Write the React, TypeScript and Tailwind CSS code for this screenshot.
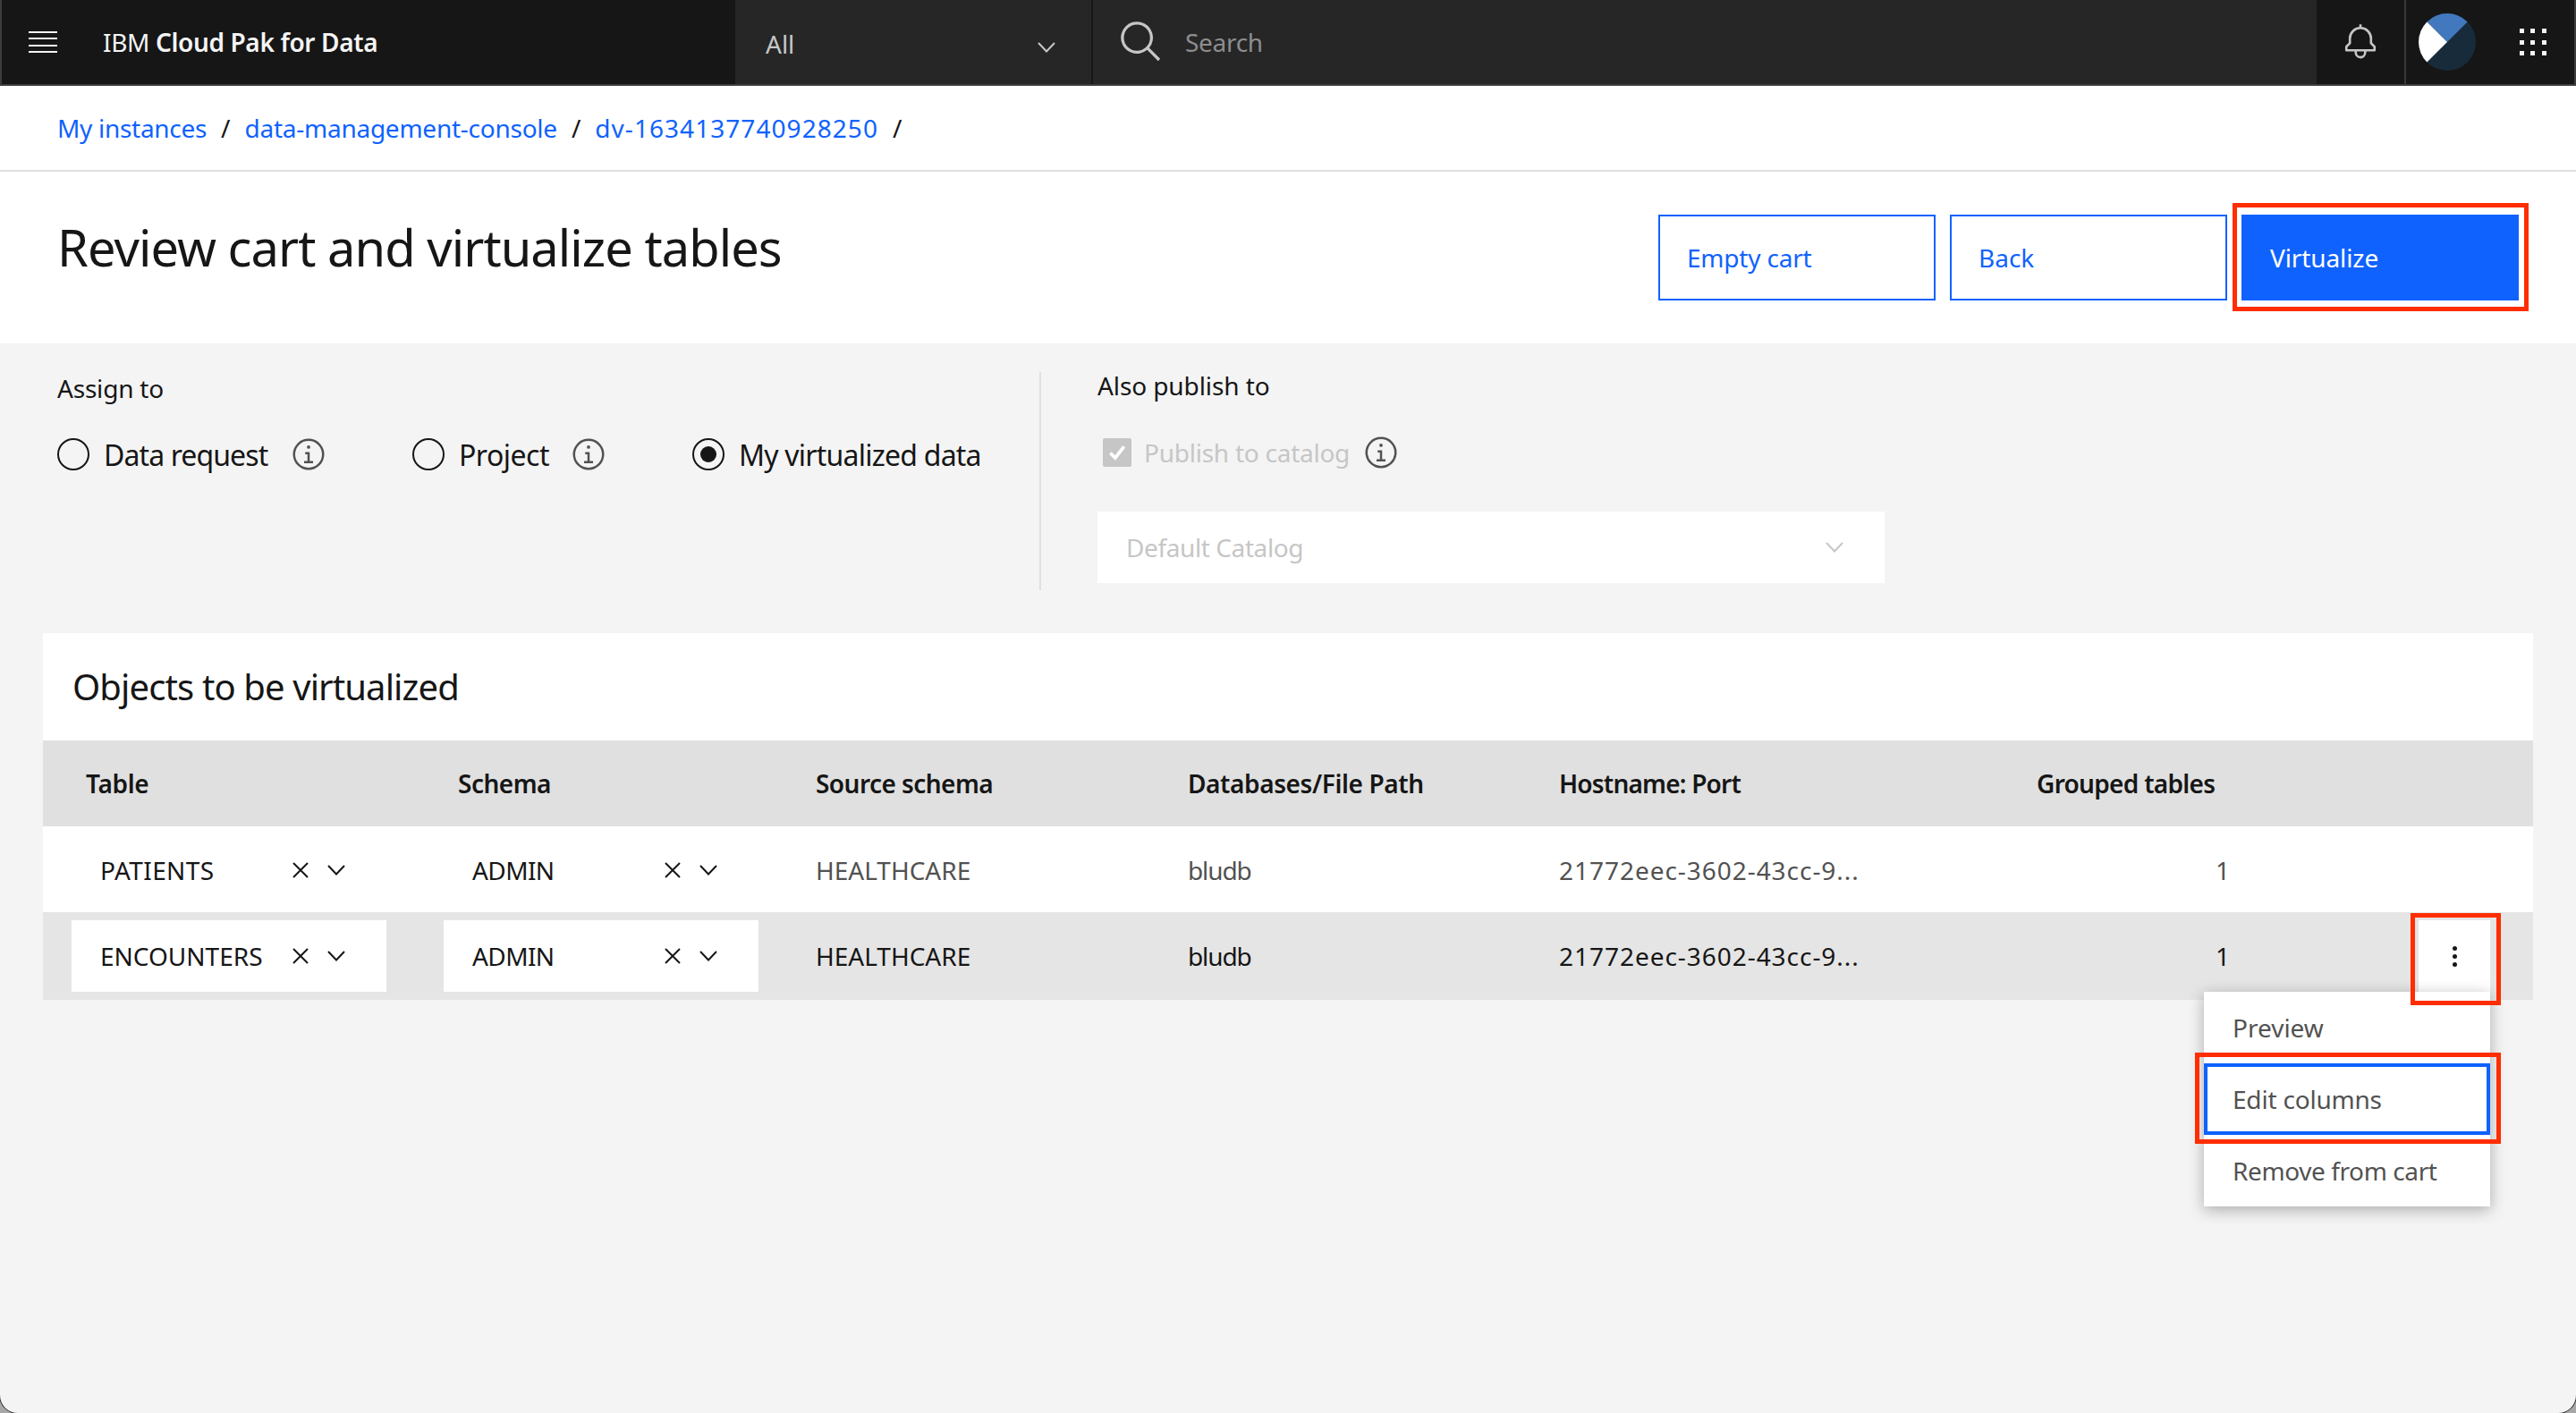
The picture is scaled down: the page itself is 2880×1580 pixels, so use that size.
import type { ReactNode } from "react";

const FONT = "font-['Noto_Sans','Liberation_Sans',sans-serif]";

function InfoIcon({ className }: { className?: string }) {
  return (
    <svg viewBox="0 0 32 32" className={className} fill="currentColor">
      <path d="M17 22L17 14 13 14 13 16 15 16 15 22 12 22 12 24 20 24 20 22 17 22zM16 8a1.5 1.5 0 101.5 1.5A1.5 1.5 0 0016 8z" />
      <path d="M16,30A14,14,0,1,1,30,16,14,14,0,0,1,16,30ZM16,4A12,12,0,1,0,28,16,12,12,0,0,0,16,4Z" />
    </svg>
  );
}

function Chevron({ className }: { className?: string }) {
  return (
    <svg viewBox="0 0 20 12" className={className} fill="none" stroke="currentColor" strokeWidth="2">
      <path d="M1 1l9 9.5L19 1" />
    </svg>
  );
}

function CloseIcon() {
  return (
    <svg viewBox="0 0 18 18" className="h-[18px] w-[18px] text-[#161616]" fill="none" stroke="currentColor" strokeWidth="2">
      <path d="M1 1l16 16M17 1L1 17" />
    </svg>
  );
}

function Radio({ checked }: { checked?: boolean }) {
  return (
    <span className="flex size-[36px] shrink-0 items-center justify-center rounded-full border-2 border-[#161616]">
      {checked ? <span className="size-[18px] rounded-full bg-[#161616]" /> : null}
    </span>
  );
}

function Annotation({ className }: { className: string }) {
  return <span className={`pointer-events-none absolute z-30 border-[5px] border-[#ff2d00] ${className}`} />;
}

function ComboBox({ value, filled, tracking }: { value: string; filled?: boolean; tracking: string }) {
  return (
    <div className={`flex h-[80px] w-[352px] items-center pl-[32px] text-[28px] ${filled ? "bg-white" : ""}`}>
      <span className={`w-[215px] text-[#161616] ${tracking}`}>{value}</span>
      <CloseIcon />
      <Chevron className="ml-[21px] h-[12px] w-[20px] text-[#161616]" />
    </div>
  );
}

function Cell({ children }: { children: ReactNode }) {
  return <div className="flex items-center">{children}</div>;
}

function TableRow({ name, active, tracking }: { name: string; active?: boolean; tracking: string }) {
  const tone = active ? "text-[#161616]" : "text-[#525252]";
  return (
    <div
      className={`grid grid-cols-[416px_448px_416px_415px_534px_1fr] text-[28px] ${
        active ? "h-[98px] bg-[#e5e5e5]" : "h-[96px] bg-white pt-[2px]"
      }`}
    >
      <Cell>
        <div className="pl-[32px]">
          <ComboBox value={name} filled={active} tracking={tracking} />
        </div>
      </Cell>
      <Cell>
        <div className="pl-[32px]">
          <ComboBox value="ADMIN" filled={active} tracking="tracking-[-0.6px]" />
        </div>
      </Cell>
      <Cell>
        <span className={tone}>HEALTHCARE</span>
      </Cell>
      <Cell>
        <span className={`tracking-[-1.1px] ${tone}`}>bludb</span>
      </Cell>
      <Cell>
        <span className={`tracking-[0.96px] ${tone}`}>21772eec-3602-43cc-9...</span>
      </Cell>
      <div className="flex items-center pr-[48px]">
        <span className={`w-[216px] text-right ${tone}`}>1</span>
        {active ? (
          <div className="relative ml-auto h-[80px] w-[80px]">
            <div className="flex h-full w-full flex-col items-center justify-center gap-[4px] bg-white">
              <span className="size-[5px] rounded-full bg-[#161616]" />
              <span className="size-[5px] rounded-full bg-[#161616]" />
              <span className="size-[5px] rounded-full bg-[#161616]" />
            </div>
            <Annotation className="-top-[8px] -bottom-[15px] -left-[9px] -right-[12px]" />
            <RowMenu />
          </div>
        ) : null}
      </div>
    </div>
  );
}

function RowMenu() {
  return (
    <div className="absolute right-0 top-[80px] z-20 w-[320px] bg-white text-[28px] text-[#525252] shadow-[0_4px_16px_rgba(0,0,0,0.3)]">
      <div className="flex h-[80px] items-center pl-[32px]">Preview</div>
      <div className="relative flex h-[80px] items-center border-4 border-[#0f62fe] pl-[28px] tracking-[-0.2px]">
        Edit columns
        <Annotation className="-top-[16px] -bottom-[14px] -left-[14px] -right-[16px]" />
      </div>
      <div className="flex h-[80px] items-center pl-[32px] tracking-[-0.4px]">Remove from cart</div>
    </div>
  );
}

export default function App() {
  return (
    <div className={`h-[1580px] w-[2880px] overflow-hidden bg-[#a8a8a8] ${FONT}`}>
      <div className="h-full overflow-hidden rounded-b-[20px] bg-[#f4f4f4] shadow-[0_0_0_1px_#333]">
        <header className="flex h-[96px] border-x-2 border-b-2 border-[#3d3d3d] bg-[#262626] text-[28px]">
          <div className="flex w-[820px] items-center bg-[#161616] pl-[30px]">
            <div className="flex h-[24px] w-[32px] flex-col justify-between">
              <span className="h-[2px] bg-[#f4f4f4]" />
              <span className="h-[2px] bg-[#f4f4f4]" />
              <span className="h-[2px] bg-[#f4f4f4]" />
              <span className="h-[2px] bg-[#f4f4f4]" />
            </div>
            <span className="ml-[51px] tracking-[-0.36px] text-[#f4f4f4]">
              IBM <span className="font-semibold">Cloud Pak for Data</span>
            </span>
          </div>
          <div className="flex w-[400px] items-center border-r-2 border-[#161616] pl-[34px] pr-[40px] text-[#c6c6c6]">
            <span className="mt-[4px] flex-1">All</span>
            <Chevron className="mt-[12px] h-[12px] w-[20px]" />
          </div>
          <div className="flex flex-1 items-center pl-[28px] text-[#8d8d8d]">
            <svg viewBox="0 0 32 32" className="h-[52px] w-[52px] text-[#c6c6c6]" fill="currentColor">
              <path d="M29,27.5859l-7.5521-7.5521a11.0177,11.0177,0,1,0-1.4141,1.4141L27.5859,29ZM4,13a9,9,0,1,1,9,9A9.01,9.01,0,0,1,4,13Z" />
            </svg>
            <span className="ml-[23px] tracking-[-0.3px]">Search</span>
          </div>
          <div className="flex w-[288px] items-center bg-[#161616]">
            <div className="flex h-full w-[100px] items-center justify-center border-r-2 border-[#393939]">
              <svg viewBox="0 0 32 32" className="h-[42px] w-[42px] text-[#c6c6c6]" fill="currentColor">
                <path d="M28.7071,19.293,26,16.5859V13a10.0136,10.0136,0,0,0-9-9.9492V1H15V3.0508A10.0136,10.0136,0,0,0,6,13v3.5859L3.2929,19.293A1,1,0,0,0,3,20v3a1,1,0,0,0,1,1h7v.7768a5.152,5.152,0,0,0,4.5,5.1987A5.0057,5.0057,0,0,0,21,25V24h7a1,1,0,0,0,1-1V20A1,1,0,0,0,28.7071,19.293ZM19,25a3,3,0,0,1-6,0V24h6Zm8-3H5V20.4141L7.707,17.707A1,1,0,0,0,8,17V13a8,8,0,0,1,16,0v4a1,1,0,0,0,.293.707L27,20.4141Z" />
              </svg>
            </div>
            <svg viewBox="-32 -32 64 64" className="ml-[14px] h-[64px] w-[64px]">
              <circle r="32" fill="#172b3a" />
              <path d="M0 0L-22.6 -22.6A32 32 0 0 1 22.6 -22.6Z" fill="#4178be" />
              <path d="M0 0L-22.6 -22.6A32 32 0 0 0 -22.6 22.6Z" fill="#ffffff" />
            </svg>
            <svg viewBox="0 0 30 30" className="ml-[49px] h-[30px] w-[30px]" fill="#f4f4f4">
              <rect x="0" y="0" width="5" height="5" />
              <rect x="12" y="0" width="5" height="5" />
              <rect x="25" y="0" width="5" height="5" />
              <rect x="0" y="13" width="5" height="5" />
              <rect x="12" y="13" width="5" height="5" />
              <rect x="25" y="13" width="5" height="5" />
              <rect x="0" y="25" width="5" height="5" />
              <rect x="12" y="25" width="5" height="5" />
              <rect x="25" y="25" width="5" height="5" />
            </svg>
          </div>
        </header>

        <nav className="flex h-[96px] items-center border-b-2 border-[#e0e0e0] bg-white pl-[64px] text-[28px] text-[#0f62fe]">
          <span className="tracking-[-0.3px]">My instances</span>
          <span className="mx-[16px] text-[#161616]">/</span>
          <span className="tracking-[-0.25px]">data-management-console</span>
          <span className="mx-[16px] text-[#161616]">/</span>
          <span className="tracking-[1.05px]">dv-1634137740928250</span>
          <span className="ml-[16px] text-[#161616]">/</span>
        </nav>

        <section className="flex h-[192px] items-start justify-between bg-white pl-[64px] pr-[64px] pt-[48px]">
          <h1 className="text-[56px] font-normal leading-[72px] tracking-[-0.95px] text-[#161616]">Review cart and virtualize tables</h1>
          <div className="flex gap-[16px] text-[28px]">
            <div className="flex h-[96px] w-[310px] items-center border-2 border-[#0f62fe] pl-[30px] tracking-[-0.2px] text-[#0f62fe]">Empty cart</div>
            <div className="flex h-[96px] w-[310px] items-center border-2 border-[#0f62fe] pl-[30px] text-[#0f62fe]">Back</div>
            <div className="relative flex h-[96px] w-[310px] items-center bg-[#0f62fe] pl-[32px] tracking-[-0.1px] text-white">
              Virtualize
              <Annotation className="-top-[13px] -bottom-[12px] -left-[10px] -right-[11px]" />
            </div>
          </div>
        </section>

        <section className="flex h-[276px] pt-[32px] text-[#161616]">
          <div className="h-[244px] w-[1098px] pl-[64px] box-content">
            <div className="-mt-[2px] text-[28px] leading-[40px] tracking-[-0.2px]">Assign to</div>
            <div className="mt-[34px] flex h-[40px] items-center text-[32px]">
              <div className="flex w-[397px] items-center">
                <Radio />
                <span className="ml-[16px] w-[184px] whitespace-nowrap pt-[2px] tracking-[-0.9px]">Data request</span>
                <InfoIcon className="ml-[25px] size-[40px] text-[#525252]" />
              </div>
              <div className="flex w-[313px] items-center">
                <Radio />
                <span className="ml-[16px] w-[100px] whitespace-nowrap pt-[2px] tracking-[-0.5px]">Project</span>
                <InfoIcon className="ml-[25px] size-[40px] text-[#525252]" />
              </div>
              <div className="flex items-center">
                <Radio checked />
                <span className="ml-[16px] whitespace-nowrap pt-[2px] tracking-[-0.77px]">My virtualized data</span>
              </div>
            </div>
          </div>
          <div className="h-[244px] w-[2px] bg-[#e0e0e0]" />
          <div className="pl-[63px]">
            <div className="text-[28px] leading-[30px] tracking-[-0.1px]">Also publish to</div>
            <div className="mt-[40px] flex h-[40px] items-center pl-[6px]">
              <span className="flex size-[32px] items-center justify-center rounded-[2px] bg-[#c6c6c6]">
                <svg viewBox="0 0 20 20" className="size-[22px]" fill="none" stroke="#ffffff" strokeWidth="3.4">
                  <path d="M3 10.5l5 5L17 4" />
                </svg>
              </span>
              <span className="ml-[14px] w-[230px] whitespace-nowrap text-[28px] tracking-[-0.25px] text-[#c6c6c6]">Publish to catalog</span>
              <InfoIcon className="ml-[15px] size-[40px] text-[#525252]" />
            </div>
            <div className="mt-[46px] flex h-[80px] w-[880px] items-center bg-white pl-[32px] pr-[46px] text-[28px] text-[#c6c6c6]">
              <span className="flex-1 tracking-[-0.4px]">Default Catalog</span>
              <Chevron className="h-[12px] w-[20px]" />
            </div>
          </div>
        </section>

        <section className="mx-[48px] mt-[48px]">
          <div className="flex h-[120px] items-center bg-white pl-[33px] text-[40px] tracking-[-0.88px] text-[#161616]">Objects to be virtualized</div>
          <div className="grid h-[96px] grid-cols-[416px_448px_416px_415px_534px_1fr] items-center bg-[#e0e0e0] text-[28px] font-semibold text-[#161616]">
            <span className="pl-[48px] tracking-[-0.3px]">Table</span>
            <span className="pl-[48px] tracking-[-0.5px]">Schema</span>
            <span className="tracking-[-0.55px]">Source schema</span>
            <span className="tracking-[-0.39px]">Databases/File Path</span>
            <span className="tracking-[-0.8px]">Hostname: Port</span>
            <span className="tracking-[-0.7px]">Grouped tables</span>
          </div>
          <TableRow name="PATIENTS" tracking="tracking-[0.4px]" />
          <TableRow name="ENCOUNTERS" tracking="tracking-normal" active />
        </section>
      </div>
    </div>
  );
}
